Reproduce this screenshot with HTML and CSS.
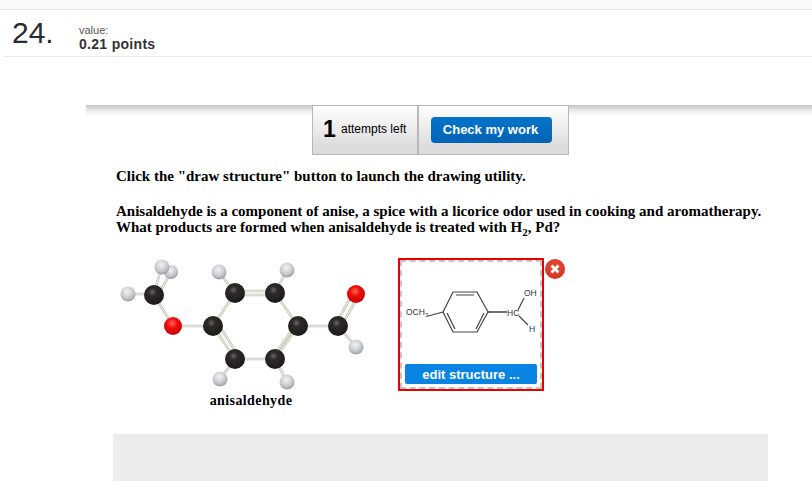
FILE: index.html
```html
<!DOCTYPE html>
<html lang="en">
<head>
<meta charset="utf-8">
<title>Question 24</title>
<link rel="stylesheet" href="styles.css">
</head>
<body>
<div class="topstrip"></div>
<header class="qhead">
  <div class="qnum">24.</div>
  <div class="qvalue"><div class="qvalue-label">value:</div><div class="qvalue-points">0.21 points</div></div>
</header>
<main class="qmain">
  <div class="band">
    <div class="toolbar">
      <div class="attempts"><span class="attempts-num">1</span><span class="attempts-text">attempts left</span></div>
      <div class="check"><button class="check-btn">Check my work</button></div>
    </div>
  </div>
  <div class="content">
    <p class="line first">Click the "draw structure" button to launch the drawing utility.</p>
    <p class="line">Anisaldehyde is a component of anise, a spice with a licorice odor used in cooking and aromatherapy.<br>What products are formed when anisaldehyde is treated with H<sub>2</sub>, Pd?</p>
    <div class="figures">
      <figure class="molecule">
        <svg class="mol-svg" width="270" height="142" viewBox="0 0 270 142">
          <defs>
            <radialGradient id="gc" cx="42%" cy="35%" r="65%"><stop offset="0" stop-color="#6a6463"/><stop offset=".3" stop-color="#2e2a2a"/><stop offset="1" stop-color="#1c1919"/></radialGradient>
            <radialGradient id="gh" cx="45%" cy="35%" r="70%"><stop offset="0" stop-color="#f2f3f4"/><stop offset=".6" stop-color="#c6c9cc"/><stop offset="1" stop-color="#8f9396"/></radialGradient>
            <radialGradient id="go" cx="45%" cy="35%" r="70%"><stop offset="0" stop-color="#ff6a50"/><stop offset=".4" stop-color="#f00d0d"/><stop offset="1" stop-color="#b80606"/></radialGradient>
            <path id="bonds" d="M51 18L44 45M61 22L48 45M18 44H44M44 45L63 76M63 76H103M188 76H228M125 43L109 22M165 43L177 20M125 109L110 129M165 109L177 132M228 76L246 97M103 76L125 43M125 41H165M125 45H165M165 43L188 76M188 76L165 109M125 109H165M103 76L125 109M108 74L128 105M184 77L163 107M226 74L243 43M231 77L248 46"/>
          </defs>
          <use href="#bonds" class="bond-edge"/>
          <use href="#bonds" class="bond-core"/>
          <circle cx="61" cy="22" r="7" fill="url(#gh)"/>
          <circle cx="52" cy="17" r="7.5" fill="url(#gh)"/>
          <circle cx="18" cy="44" r="7.5" fill="url(#gh)"/>
          <circle cx="109" cy="22" r="7.5" fill="url(#gh)"/>
          <circle cx="177" cy="20" r="7.5" fill="url(#gh)"/>
          <circle cx="246" cy="97" r="7.5" fill="url(#gh)"/>
          <circle cx="110" cy="129" r="7.5" fill="url(#gh)"/>
          <circle cx="177" cy="132" r="7.5" fill="url(#gh)"/>
          <circle cx="44" cy="45" r="10" fill="url(#gc)"/>
          <circle cx="103" cy="76" r="10" fill="url(#gc)"/>
          <circle cx="125" cy="43" r="10" fill="url(#gc)"/>
          <circle cx="165" cy="43" r="10" fill="url(#gc)"/>
          <circle cx="188" cy="76" r="10" fill="url(#gc)"/>
          <circle cx="165" cy="109" r="10" fill="url(#gc)"/>
          <circle cx="125" cy="109" r="10" fill="url(#gc)"/>
          <circle cx="228" cy="76" r="10" fill="url(#gc)"/>
          <circle cx="63" cy="76" r="9" fill="url(#go)"/>
          <circle cx="246" cy="44" r="9" fill="url(#go)"/>
        </svg>
        <figcaption class="mol-cap">anisaldehyde</figcaption>
      </figure>
      <div class="structure-wrap">
        <div class="structure">
          <div class="structure-inner">
            <svg class="struct-svg" width="138" height="99" viewBox="0 0 138 99">
              <g class="sbond">
                <path d="M25 51L40 47L50 27H74L85 47L74 67H50L40 47M53 30H71M44 48L52 64M81 48L73 64"/>
                <path class="dark" d="M85 47H104"/>
                <path d="M115 45L121 33M116 51L125 60"/>
              </g>
              <text class="stext" x="3" y="50">OCH<tspan class="ssub" dy="2">3</tspan></text>
              <text class="stext" x="104" y="51">HC</text>
              <text class="stext" x="121" y="31">OH</text>
              <text class="stext hblue" x="126" y="67">H</text>
            </svg>
            <button class="edit-btn">edit structure ...</button>
          </div>
        </div>
        <button class="close-btn" aria-label="Remove">
          <svg width="10" height="10" viewBox="0 0 10 10"><path d="M1.5 1.5L8.5 8.5M8.5 1.5L1.5 8.5" stroke="#fff" stroke-width="2.6"/></svg>
        </button>
      </div>
    </div>
  </div>
  <div class="answer"></div>
</main>
</body>
</html>
```

FILE: styles.css
```css
html, body { margin: 0; padding: 0; background: #fff; }
body { width: 812px; height: 489px; overflow: hidden; font-family: "Liberation Sans", Arial, sans-serif; color: #333; }
.topstrip { height: 9px; background: #f9f9f9; border-bottom: 1px solid #e8e8e8; }
.qhead { margin-left: 4px; height: 46px; border-bottom: 1px solid #e8e8e8; display: flex; }
.qnum { width: 75px; padding-left: 8px; box-sizing: border-box; font-size: 30px; line-height: 46px; color: #2a2a2a; }
.qvalue { padding-top: 14px; }
.qvalue-label { font-size: 11px; line-height: 13px; color: #555; }
.qvalue-points { font-size: 14px; line-height: 15px; font-weight: bold; color: #333; letter-spacing: .3px; }
.qmain { margin: 48px 0 0 86px; }
.band { height: 50px; background: linear-gradient(#c4c4c4, #eee 6px, #fff 11px) no-repeat; padding-left: 226px; }
.toolbar { display: flex; width: 257px; height: 50px; box-sizing: border-box; border: 1px solid #b8b8b8; background: linear-gradient(#fff, #dcdcdc 85%); }
.attempts { width: 106px; box-sizing: border-box; border-right: 2px solid #b8b8b8; display: flex; align-items: center; padding-left: 10px; color: #000; }
.attempts-num { font-size: 23px; line-height: 26px; font-weight: bold; width: 18px; padding-bottom: 3px; }
.attempts-text { font-size: 12px; padding-bottom: 2px; }
.check { flex: 1; display: flex; align-items: center; padding-left: 12px; }
.check-btn { width: 121px; height: 26px; padding: 0 2px 2px 0; border: 0; border-radius: 4px; background: linear-gradient(#0574cb, #0363b4); color: #fff; font: bold 13px "Liberation Sans", Arial, sans-serif; }
.content { padding: 13px 0 0 30px; color: #000; font-family: "Liberation Serif", "Times New Roman", serif; font-weight: bold; }
.line { margin: 0 0 19px; font-size: 15px; line-height: 16px; }
sub { font-size: 11px; line-height: 0; }
.figures { display: flex; margin-top: -4px; margin-left: -6px; }
.molecule { margin: 0; width: 288px; }
.mol-svg { display: block; }
.mol-cap { width: 270px; padding-left: 12px; margin-top: 1px; box-sizing: border-box; text-align: center; font-size: 14px; line-height: 16px; letter-spacing: .4px; }
.bond-edge { fill: none; stroke: #c4c6b8; stroke-width: 2.6; }
.bond-core { fill: none; stroke: #f1f2e9; stroke-width: 1; }
.structure-wrap { display: flex; align-items: flex-start; margin-top: 8px; }
.structure { width: 146px; height: 133px; box-sizing: border-box; border: 2px solid #e80000; }
.structure-inner { height: 129px; box-sizing: border-box; border: 2px dashed #c4c4c4; padding: 3px 3px 0; }
.struct-svg { display: block; margin: 0 -2px; }
.sbond path { fill: none; stroke: #444; stroke-width: 1.2; }
.sbond path.dark { stroke: #111; }
.stext { font: normal 8.5px "Liberation Sans", Arial, sans-serif; fill: #333; }
.ssub { font-size: 6px; }
.hblue { fill: #14407a; }
.edit-btn { display: block; width: 132px; height: 20px; padding: 0; border: 0; border-radius: 2px; background: #0a84e3; color: #fff; font: bold 13px "Liberation Sans", Arial, sans-serif; }
.close-btn { width: 20px; height: 20px; padding: 0; margin-left: 1px; border: 0; border-radius: 50%; background: radial-gradient(circle at 50% 40%, #ef4a3a, #c62c1c); display: flex; align-items: center; justify-content: center; margin-top: 1px; }
.answer { width: 655px; height: 47px; margin: 25px 0 0 27px; background: #ececec; }
```
